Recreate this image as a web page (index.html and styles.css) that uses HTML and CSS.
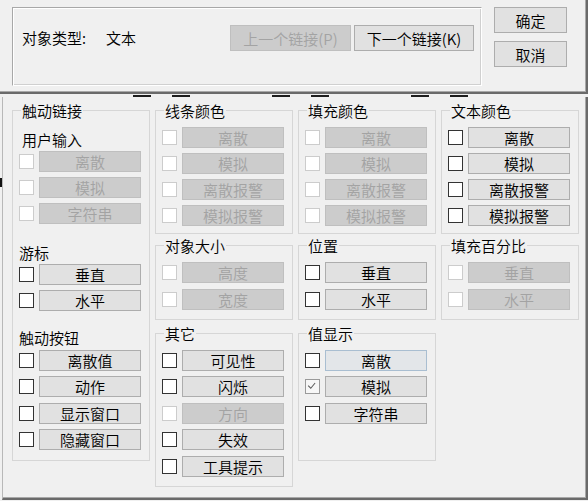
FILE: index.html
```html
<!DOCTYPE html>
<html lang="zh-CN">
<head>
<meta charset="utf-8">
<title>对象属性</title>
<link rel="stylesheet" href="styles.css">
</head>
<body>
<div class="top">
  <div class="info">
    <span class="lbl">对象类型:</span><span class="val">文本</span>
    <div class="btn wide dis">上一个链接(P)</div>
    <div class="btn wide next">下一个链接(K)</div>
  </div>
  <div class="side">
    <div class="btn side-btn">确定</div>
    <div class="btn side-btn">取消</div>
  </div>
</div>
<div class="seam"><i></i><i></i><i></i><i></i><i></i><i></i></div>
<div class="panel">
  <div class="col">
    <div class="group g-touch">
      <div class="legend">触动链接</div>
      <div class="sec sec-first">用户输入</div>
      <div class="rows r-tight">
        <div class="row"><span class="cb dis"></span><span class="btn dis">离散</span></div>
        <div class="row"><span class="cb dis"></span><span class="btn dis">模拟</span></div>
        <div class="row"><span class="cb dis"></span><span class="btn dis">字符串</span></div>
      </div>
      <div class="sec sec-cursor">游标</div>
      <div class="rows r-tight">
        <div class="row"><span class="cb"></span><span class="btn">垂直</span></div>
        <div class="row"><span class="cb"></span><span class="btn">水平</span></div>
      </div>
      <div class="sec sec-btn">触动按钮</div>
      <div class="rows r-btn alt">
        <div class="row"><span class="cb"></span><span class="btn">离散值</span></div>
        <div class="row"><span class="cb"></span><span class="btn">动作</span></div>
        <div class="row"><span class="cb"></span><span class="btn">显示窗口</span></div>
        <div class="row"><span class="cb"></span><span class="btn">隐藏窗口</span></div>
      </div>
    </div>
  </div>
  <div class="col">
    <div class="group">
      <div class="legend">线条颜色</div>
      <div class="rows">
        <div class="row"><span class="cb dis"></span><span class="btn dis">离散</span></div>
        <div class="row"><span class="cb dis"></span><span class="btn dis">模拟</span></div>
        <div class="row"><span class="cb dis"></span><span class="btn dis">离散报警</span></div>
        <div class="row"><span class="cb dis"></span><span class="btn dis">模拟报警</span></div>
      </div>
    </div>
    <div class="group g-mid">
      <div class="legend">对象大小</div>
      <div class="rows two">
        <div class="row"><span class="cb dis"></span><span class="btn dis">高度</span></div>
        <div class="row"><span class="cb dis"></span><span class="btn dis">宽度</span></div>
      </div>
    </div>
    <div class="group g-low">
      <div class="legend">其它</div>
      <div class="rows alt">
        <div class="row"><span class="cb"></span><span class="btn">可见性</span></div>
        <div class="row"><span class="cb"></span><span class="btn">闪烁</span></div>
        <div class="row"><span class="cb dis"></span><span class="btn dis">方向</span></div>
        <div class="row"><span class="cb"></span><span class="btn">失效</span></div>
        <div class="row"><span class="cb"></span><span class="btn">工具提示</span></div>
      </div>
    </div>
  </div>
  <div class="col">
    <div class="group">
      <div class="legend">填充颜色</div>
      <div class="rows">
        <div class="row"><span class="cb dis"></span><span class="btn dis">离散</span></div>
        <div class="row"><span class="cb dis"></span><span class="btn dis">模拟</span></div>
        <div class="row"><span class="cb dis"></span><span class="btn dis">离散报警</span></div>
        <div class="row"><span class="cb dis"></span><span class="btn dis">模拟报警</span></div>
      </div>
    </div>
    <div class="group g-mid">
      <div class="legend">位置</div>
      <div class="rows two">
        <div class="row"><span class="cb"></span><span class="btn">垂直</span></div>
        <div class="row"><span class="cb"></span><span class="btn">水平</span></div>
      </div>
    </div>
    <div class="group g-low g-value">
      <div class="legend">值显示</div>
      <div class="rows alt">
        <div class="row"><span class="cb"></span><span class="btn focus">离散</span></div>
        <div class="row"><span class="cb on"><svg viewBox="0 0 15 15" width="13" height="13"><polyline points="2.5,6.5 5.5,9.5 10.5,3.5" fill="none" stroke="#5c5c5c" stroke-width="1.2"/></svg></span><span class="btn">模拟</span></div>
        <div class="row"><span class="cb"></span><span class="btn">字符串</span></div>
      </div>
    </div>
  </div>
  <div class="col">
    <div class="group">
      <div class="legend">文本颜色</div>
      <div class="rows">
        <div class="row"><span class="cb"></span><span class="btn">离散</span></div>
        <div class="row"><span class="cb"></span><span class="btn">模拟</span></div>
        <div class="row"><span class="cb"></span><span class="btn">离散报警</span></div>
        <div class="row"><span class="cb"></span><span class="btn">模拟报警</span></div>
      </div>
    </div>
    <div class="group g-mid">
      <div class="legend">填充百分比</div>
      <div class="rows two">
        <div class="row"><span class="cb dis"></span><span class="btn dis">垂直</span></div>
        <div class="row"><span class="cb dis"></span><span class="btn dis">水平</span></div>
      </div>
    </div>
  </div>
</div>
<i class="blip"></i>
</body>
</html>
```
FILE: styles.css
```css
* { box-sizing: border-box; margin: 0; padding: 0; }
html, body { background: #f0f0f0; }
body {
  width: 588px;
  height: 501px;
  overflow: hidden;
  position: relative;
  font-family: "Noto Sans CJK SC", "Microsoft YaHei", sans-serif;
  font-size: 15px;
  font-weight: 350;
  color: #000;
}

/* top window */
.top {
  display: flex;
  align-items: flex-start;
  height: 94px;
  border-right: 2px solid #6a6a6a;
  border-bottom: 2px solid #6a6a6a;
  box-shadow: inset -1px -1px 0 #a8a8a8;
}
.info {
  width: 470px;
  height: 79px;
  margin: 7px 0 0 12px;
  padding: 17px 0 0 9px;
  display: flex;
  align-items: flex-start;
  border: 1px solid;
  border-color: #a8a8a8 #ffffff #ffffff #a8a8a8;
  box-shadow: inset 1px 1px 0 #ffffff, inset -1px -1px 0 #d0d0d0;
}
.lbl { width: 84px; line-height: 26px; }
.val { width: 124px; line-height: 26px; }
.side {
  display: flex;
  flex-direction: column;
  gap: 8px;
  margin: 7px 0 0 12px;
}

/* buttons */
.btn {
  display: flex;
  align-items: center;
  justify-content: center;
  flex: none;
  width: 102px;
  height: 21px;
  line-height: 19px;
  white-space: nowrap;
  background: #e1e1e1;
  border: 1px solid #adadad;
}
.btn.wide { width: 121px; height: 26px; }
.btn.next { width: 120px; margin-left: 3px; }
.btn.side-btn { width: 73px; height: 26px; }
.btn.dis { background: #cccccc; border-color: #bfbfbf; color: #a3a3a3; }
.btn.focus { background: #e3e6e9; border-color: #a9bed1; }

/* seam between windows */
.seam { display: flex; height: 3px; }
.seam i { display: block; width: 18px; height: 2px; margin-top: 1px; background: #1c1c1c; }
.seam i:nth-child(1) { margin-left: 133px; }
.seam i:nth-child(2) { margin-left: 21px; }
.seam i:nth-child(3) { margin-left: 82px; }
.seam i:nth-child(4) { margin-left: 21px; }
.seam i:nth-child(5) { margin-left: 82px; }
.seam i:nth-child(6) { margin-left: 21px; }

/* lower window */
.panel {
  height: 403px;
  margin-left: 2px;
  padding: 13px 0 0 9px;
  border-left: 1px solid #b8b8b8;
  border-right: 2px solid #6a6a6a;
  border-bottom: 2px solid #6a6a6a;
  box-shadow: inset -1px -1px 0 #a8a8a8;
  display: grid;
  grid-template-columns: repeat(4, 138px);
  column-gap: 5px;
  align-items: start;
}
.col { display: flex; flex-direction: column; }

.group {
  border: 1px solid #d6d6d6;
  padding: 0 8px 7px 6px;
}
.group.g-mid { margin-top: 11px; padding-bottom: 9px; }
.group.g-low { margin-top: 13px; padding-bottom: 9px; }
.group.g-value { padding-bottom: 36px; }
.group.g-touch { padding-bottom: 10px; }

.legend {
  width: max-content;
  height: 17px;
  line-height: 17px;
  margin: -9px 0 0 2px;
  padding: 0 1px;
  background: #f0f0f0;
}
.sec { height: 16px; line-height: 16px; }
.sec-first { margin-top: 13px; padding-left: 3px; }
.sec-cursor { margin-top: 21px; }
.sec-btn { margin-top: 19px; }

.rows { display: flex; flex-direction: column; gap: 5px; margin-top: 8px; }
.rows.r-tight { margin-top: 3px; }
.rows.r-btn { margin-top: 4px; }
.rows.two { gap: 6px; }
.rows.alt .row:nth-child(3),
.rows.alt .row:nth-child(5) { margin-top: 1px; }

.row { display: flex; align-items: center; height: 21px; }

.cb {
  display: flex;
  align-items: center;
  justify-content: center;
  flex: none;
  width: 15px;
  height: 15px;
  margin-right: 5px;
  background: #ffffff;
  border: 1px solid #333333;
}
.cb.dis { border-color: #cccccc; }
.cb.on { border-color: #9a9a9a; background: #f7f7f7; }

.blip {
  position: absolute;
  left: 0;
  top: 178px;
  width: 2px;
  height: 9px;
  background: #111;
}
```
